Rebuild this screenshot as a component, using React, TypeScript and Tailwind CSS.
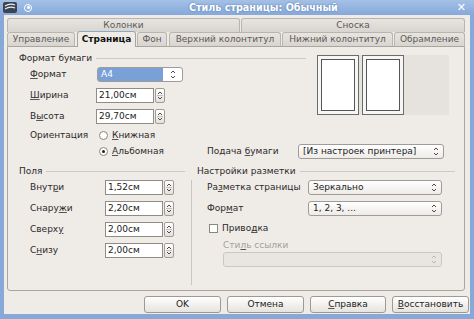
import React from "react";

const FONT = "font-['DejaVu_Sans',sans-serif]";

function SpinIcon() {
  return (
    <svg width="6" height="11" viewBox="0 0 6 11">
      <path d="M1 4 L3 2 L5 4 M1 7 L3 9 L5 7" stroke="#4a4a4a" fill="none" strokeWidth="1" />
    </svg>
  );
}

function Spin() {
  return (
    <div className="w-[10px] h-[15px] ml-[1px] border border-[#9f9b96] rounded-[2px] bg-gradient-to-b from-white to-[#e4e1dd] flex flex-col items-center justify-center">
      <svg width="6" height="13" viewBox="0 0 6 13">
        <path d="M1 5 L3 3 L5 5" stroke="#4a4a4a" fill="none" strokeWidth="1" />
        <line x1="0" y1="6.5" x2="6" y2="6.5" stroke="#c4c0bb" strokeWidth="1" />
        <path d="M1 8 L3 10 L5 8" stroke="#4a4a4a" fill="none" strokeWidth="1" />
      </svg>
    </div>
  );
}

function Input({ value, w = "w-[58px]" }: { value: string; w?: string }) {
  return (
    <div className="flex items-center">
      <div className={`${w} h-[15px] bg-white border border-[#8f8b86] flex items-center pl-[2px] text-[#222]`}>{value}</div>
      <Spin />
    </div>
  );
}

function Select({ value, w, disabled }: { value: string; w: string; disabled?: boolean }) {
  return (
    <div
      className={`${w} h-[15px] rounded-[3px] border ${
        disabled ? "border-[#cbc7c2] bg-[#e9e6e2]" : "border-[#9f9b96] bg-gradient-to-b from-white to-[#eeebe8]"
      } flex items-center justify-between pl-[4px] pr-[4px] text-[#222]`}
    >
      <span>{value}</span>
      <span className={disabled ? "opacity-30" : ""}>
        <SpinIcon />
      </span>
    </div>
  );
}

function Radio({ checked }: { checked?: boolean }) {
  return (
    <div className="w-[9px] h-[9px] rounded-full border border-[#8a8680] bg-white flex items-center justify-center">
      {checked && <div className="w-[3px] h-[3px] rounded-full bg-[#222]" />}
    </div>
  );
}

function U({ children }: { children: React.ReactNode }) {
  return <span className="underline underline-offset-[1px] decoration-[#555]">{children}</span>;
}

function Header({ text }: { text: string }) {
  return (
    <div className="h-[12px] flex items-center text-[#2a2a2a]">
      <span>{text}</span>
      <div className="flex-1 h-px bg-[#cdc9c4] ml-[4px]" />
    </div>
  );
}

function Tab({ label, w, active }: { label: string; w: string; active?: boolean }) {
  if (active) {
    return (
      <div
        className={`${w} h-[16px] -mt-[2px] -mb-px relative z-10 border border-b-0 border-[#a8a39d] border-t-[#8fa8c8] rounded-t-[3px] bg-[#efebe7] flex items-center justify-center font-bold text-[#111]`}
      >
        {label}
      </div>
    );
  }
  return (
    <div
      className={`${w} h-[14px] border border-b-0 border-[#b9b4ae] rounded-t-[3px] bg-gradient-to-b from-[#e8e5e1] to-[#d8d4cf] flex items-center justify-center text-[#5c5a57]`}
    >
      {label}
    </div>
  );
}

function Button({ children, w }: { children: React.ReactNode; w: string }) {
  return (
    <div
      className={`${w} h-[17px] rounded-[3px] border border-[#9d9993] bg-gradient-to-b from-white to-[#e6e3df] flex items-center justify-center text-[#222]`}
    >
      {children}
    </div>
  );
}

function Page() {
  return (
    <div className="w-[42px] h-[60px] border border-[#6b6b6b] bg-[#f6f6f6] p-[3px]">
      <div className="w-full h-full border border-[#555] bg-white" />
    </div>
  );
}

export default function App() {
  return (
    <div className={`${FONT} text-[9px] leading-none w-[474px] h-[319px] bg-[#87a9d8] flex flex-col overflow-hidden`}>
      {/* title bar */}
      <div className="h-[15px] flex items-center bg-gradient-to-b from-[#a4c0e6] to-[#86a9da]">
        <div className="ml-[3px] w-[14px] h-[11px] rounded-[2px] bg-[#3b4452] flex items-center justify-center">
          <svg width="12" height="9" viewBox="0 0 12 9">
            <path d="M1 3 Q6 0 11 2 M1 6 Q6 3 11 5" stroke="#e8eef5" strokeWidth="1.2" fill="none" />
          </svg>
        </div>
        <div className="ml-[7px] w-[8px] h-[8px] rounded-full border border-white flex items-center justify-center">
          <div className="w-[3px] h-[3px] rounded-full bg-white" />
        </div>
        <div className="flex-1 text-center pl-[38px] text-white font-bold text-[9.6px] [text-shadow:0_0_2px_#4a6fa0]">
          Стиль страницы: Обычный
        </div>
        <div className="mr-[8px] text-white font-bold text-[11px]">✕</div>
      </div>

      {/* body */}
      <div className="mx-[4px] w-[466px] h-[299px] bg-[#efebe7] pl-[3px] pt-[3px] flex flex-col">
        {/* tabs */}
        <div className="flex gap-[1px] w-[458px]">
          <Tab label="Колонки" w="w-[233px]" />
          <Tab label="Сноска" w="w-[224px]" />
        </div>
        <div className="flex items-end w-[458px] h-[14px]">
          <Tab label="Управление" w="w-[68px]" />
          <div className="w-[2px]" />
          <Tab label="Страница" w="w-[59px]" active />
          <div className="w-[1px]" />
          <Tab label="Фон" w="w-[30px]" />
          <div className="w-[2px]" />
          <Tab label="Верхний колонтитул" w="w-[112px]" />
          <div className="w-[1px]" />
          <Tab label="Нижний колонтитул" w="w-[111px]" />
          <div className="w-[1px]" />
          <Tab label="Обрамление" w="w-[71px]" />
        </div>

        {/* panel */}
        <div className="w-[458px] h-[245px] border border-[#aaa59f] rounded-b-[3px] pl-[11px] pt-[5px] text-[#2a2a2a]">
          {/* top block */}
          <div className="flex">
            <div className="w-[287px] flex flex-col">
              <Header text="Формат бумаги" />
              <div className="pl-[11px]">
                <div className="h-[21px] flex items-center">
                  <div className="w-[67px]"><U>Ф</U>ормат</div>
                  <div className="w-[86px] h-[15px] rounded-[3px] border border-[#9f9b96] bg-white flex items-center">
                    <div className="w-[65px] h-[13px] bg-[#7aa0d8] text-white flex items-center pl-[3px]">A4</div>
                    <div className="flex-1 flex justify-center"><SpinIcon /></div>
                  </div>
                </div>
                <div className="h-[21px] flex items-center">
                  <div className="w-[66px]"><U>Ш</U>ирина</div>
                  <Input value="21,00см" />
                </div>
                <div className="h-[21px] flex items-center">
                  <div className="w-[66px]">В<U>ы</U>сота</div>
                  <Input value="29,70см" />
                </div>
                <div className="h-[16px] flex items-center">
                  <div className="w-[69px]">Ориентация</div>
                  <Radio />
                  <span className="ml-[4px]"><U>К</U>нижная</span>
                </div>
              </div>
            </div>
            <div className="ml-[11px] mt-[3px] w-[132px] h-[60px] bg-[#e6e3df] flex gap-[3px]">
              <Page />
              <Page />
            </div>
          </div>
          <div className="h-[17px] flex items-center">
            <div className="w-[188px] pl-[80px] flex items-center">
              <Radio checked />
              <span className="ml-[4px]"><U>А</U>льбомная</span>
            </div>
            <div className="w-[91px]">Подача <U>б</U>умаги</div>
            <Select value="[Из настроек принтера]" w="w-[146px]" />
          </div>

          {/* bottom block */}
          <div className="flex mt-[5px]">
            <div className="w-[166px] flex flex-col">
              <Header text="Поля" />
              <div className="pl-[11px]">
                {[
                  [<>Внут<U>р</U>и</>, "1,52см"],
                  [<>Снару<U>ж</U>и</>, "2,20см"],
                  [<>Сверх<U>у</U></>, "2,00см"],
                  [<>С<U>н</U>изу</>, "2,00см"],
                ].map(([l, v], i) => (
                  <div key={i} className="h-[21px] flex items-center">
                    <div className="w-[75px]">{l}</div>
                    <Input value={v as string} />
                  </div>
                ))}
              </div>
            </div>
            <div className="ml-[6px] mt-[15px] w-px h-[105px] bg-[#c9c5c0]" />
            <div className="ml-[5px] w-[258px] flex flex-col">
              <Header text="Настройки разметки" />
              <div className="pl-[10px]">
                <div className="h-[21px] flex items-center">
                  <div className="w-[101px]">Ра<U>з</U>метка страницы</div>
                  <Select value="Зеркально" w="w-[134px]" />
                </div>
                <div className="h-[21px] flex items-center">
                  <div className="w-[101px]">Фор<U>м</U>ат</div>
                  <Select value="1, 2, 3, ..." w="w-[134px]" />
                </div>
                <div className="h-[19px] flex items-center pl-[2px]">
                  <div className="w-[9px] h-[9px] border border-[#8a8680] bg-white" />
                  <span className="ml-[4px]">Приво<U>д</U>ка</span>
                </div>
                <div className="h-[14px] flex items-center pl-[16px] text-[#a5a19c]">
                  Сти<U>л</U>ь ссылки
                </div>
                <div className="pl-[16px]">
                  <Select value="" w="w-[219px]" disabled />
                </div>
              </div>
            </div>
          </div>
        </div>

        {/* buttons */}
        <div className="mt-[5px] flex justify-end gap-[6px] pr-[1px]">
          <Button w="w-[77px]">OK</Button>
          <Button w="w-[77px]">Отмена</Button>
          <Button w="w-[76px]"><span><U>С</U>правка</span></Button>
          <Button w="w-[77px]"><span><U>В</U>осстановить</span></Button>
        </div>
      </div>
    </div>
  );
}
